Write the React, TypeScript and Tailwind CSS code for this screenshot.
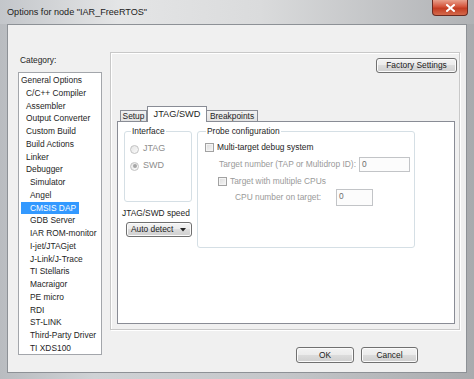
import React from 'react';

// tree of option categories, second value is the indent level
const categories: [string, number][] = [
    ['General Options', 0],
    ['C/C++ Compiler', 1],
    ['Assembler', 1],
    ['Output Converter', 1],
    ['Custom Build', 1],
    ['Build Actions', 1],
    ['Linker', 1],
    ['Debugger', 1],
    ['Simulator', 2],
    ['Angel', 2],
    ['CMSIS DAP', 2],
    ['GDB Server', 2],
    ['IAR ROM-monitor', 2],
    ['I-jet/JTAGjet', 2],
    ['J-Link/J-Trace', 2],
    ['TI Stellaris', 2],
    ['Macraigor', 2],
    ['PE micro', 2],
    ['RDI', 2],
    ['ST-LINK', 2],
    ['Third-Party Driver', 2],
    ['TI XDS100', 2],
];

const indent = ['pl-[2px]', 'pl-[7px]', 'pl-[11px]'];

const btn =
    'flex items-center justify-center border border-[#707070] rounded-[3px] bg-[linear-gradient(#f3f3f3,#ebebeb_50%,#dcdcdc_50%,#cfcfcf)] text-[#1b1b1b] shadow-[inset_0_0_0_1px_#fbfbfb]';

const Checkbox: React.FC = () => (
    <span className="inline-block w-[9px] h-[9px] border border-[#a2a2a2] bg-[linear-gradient(135deg,#dcdcdc,#f6f6f6)] shadow-[inset_0_0_0_1px_#f4f4f4]" />
);

const Radio: React.FC<{ checked?: boolean }> = ({ checked }) => (
    <span className="inline-flex items-center justify-center w-[9px] h-[9px] rounded-full border border-[#c2c2c2] bg-[linear-gradient(135deg,#e6e6e6,#fafafa)]">
        {checked && <span className="w-[4px] h-[4px] rounded-full bg-[#a6a6a6]" />}
    </span>
);

const App: React.FC = () => {
    return (
        <div className="w-[474px] h-[379px] flex flex-col bg-[linear-gradient(90deg,#b9bcc0,#cfd2d5_20%,#c4c6c9_60%,#a9abae)] font-['Liberation_Sans',Arial,sans-serif] text-[8.4px] text-[#1e1e1e] overflow-hidden">
            {/* title bar */}
            <div className="h-[24px] flex items-start bg-[linear-gradient(90deg,#c3c6ca,#e4e5e6_25%,#dadbdc_55%,#b0b2b5)]">
                <span className="pl-[7px] pt-[7px] text-[9.1px] leading-[10px] text-[#222]">Options for node "IAR_FreeRTOS"</span>
                <div className="ml-auto mr-[6px] w-[36px] h-[16px] rounded-b-[4px] border border-t-0 border-[#6b2a20] bg-[linear-gradient(#e8a08c,#d4543b_45%,#c23c22_55%,#d46a4c)] flex items-center justify-center">
                    <svg width="9" height="8" viewBox="0 0 9 8">
                        <path d="M1 1 L8 7 M8 1 L1 7" stroke="#fff" strokeWidth="2" strokeLinecap="square" />
                    </svg>
                </div>
            </div>

            {/* client area */}
            <div className="mx-[7px] mb-[6px] flex-1 border border-[#8d9196] bg-[#f0f0f0] flex">
                <div className="pl-[10px] pt-[30px] flex flex-col">
                    <span className="leading-[10px] pl-[2px]">Category:</span>
                    <div className="mt-[7px] w-[84px] h-[283px] border border-[#a3a6ab] bg-white pt-[1px]">
                        {categories.map(([name, level]) =>
                            name === 'CMSIS DAP' ? (
                                <div key={name} className="h-[12.75px] flex items-center">
                                    <span className="ml-[2px] pl-[9px] pr-[3px] leading-[12.4px] bg-[#3399ff] text-white">{name}</span>
                                </div>
                            ) : (
                                <div key={name} className={`h-[12.75px] leading-[12.75px] whitespace-nowrap ${indent[level]}`}>
                                    {name}
                                </div>
                            )
                        )}
                    </div>
                </div>

                <div className="ml-[8px] mt-[27px] flex flex-col">
                    {/* options frame */}
                    <div className="w-[350px] h-[278px] border border-[#c8c8c8] shadow-[inset_1px_1px_0_#fff,1px_1px_0_#fff] flex flex-col">
                        <div className="flex justify-end pt-[5px] pr-[2px]">
                            <div className={`${btn} w-[81px] h-[15px]`}>Factory Settings</div>
                        </div>

                        <div className="mt-[33px] ml-[6px] flex flex-col">
                            <div className="flex items-end pl-[3px] h-[15px]">
                                <div className="w-[27px] h-[11px] border border-b-0 border-[#898c95] bg-[linear-gradient(#f2f2f2,#e3e3e3)] flex items-center justify-center">
                                    Setup
                                </div>
                                <div className="relative z-10 w-[60px] h-[16px] -mb-px border border-b-0 border-[#898c95] bg-white flex items-center justify-center text-[9.2px]">
                                    JTAG/SWD
                                </div>
                                <div className="w-[51px] h-[11px] border border-b-0 border-l-0 border-[#898c95] bg-[linear-gradient(#f2f2f2,#e3e3e3)] flex items-center justify-center">
                                    Breakpoints
                                </div>
                            </div>

                            {/* tab page */}
                            <div className="w-[338px] h-[203px] border border-[#898c95] bg-white flex pl-[6px] pt-[4px]">
                                <div className="flex flex-col w-[68px]">
                                    <fieldset className="h-[76px] border border-[#d5dfe5] rounded-[3px] px-[5px]">
                                        <legend className="px-[1px] ml-[1px] leading-[10px]">Interface</legend>
                                        <div className="mt-[7px] flex items-center gap-[4px] h-[12px] text-[#8d8d8d] text-[9px]">
                                            <Radio />
                                            <span>JTAG</span>
                                        </div>
                                        <div className="mt-[5px] flex items-center gap-[4px] h-[12px] text-[#8d8d8d] text-[9px]">
                                            <Radio checked />
                                            <span>SWD</span>
                                        </div>
                                    </fieldset>
                                    <span className="mt-[6px] -ml-[2px] leading-[10px] whitespace-nowrap">JTAG/SWD speed</span>
                                    <div className={`${btn} mt-[4px] ml-[2px] w-[66px] h-[15px] justify-between! pl-[4px] pr-[5px]`}>
                                        <span>Auto detect</span>
                                        <svg width="6" height="4" viewBox="0 0 6 4">
                                            <path d="M0 0 H6 L3 3.5 Z" fill="#222" />
                                        </svg>
                                    </div>
                                </div>

                                <fieldset className="ml-[5px] w-[218px] h-[122px] border border-[#d5dfe5] rounded-[3px] pl-[7px]">
                                    <legend className="px-[1px] ml-[1px] leading-[10px]">Probe configuration</legend>
                                    <div className="mt-[6px] h-[10px] flex items-center gap-[3px]">
                                        <Checkbox />
                                        <span>Multi-target debug system</span>
                                    </div>
                                    <div className="mt-[5px] flex items-center pl-[14px] text-[#9a9a9a]">
                                        <span className="w-[140px] whitespace-nowrap">Target number (TAP or Multidrop ID):</span>
                                        <div className="w-[51px] h-[15px] border border-[#c2c4c7] bg-[#fcfcfc] pl-[2px] leading-[13px] text-[#6d6d6d]">0</div>
                                    </div>
                                    <div className="mt-[4px] h-[10px] flex items-center gap-[3px] pl-[13px] text-[#9a9a9a]">
                                        <Checkbox />
                                        <span>Target with multiple CPUs</span>
                                    </div>
                                    <div className="mt-[3px] flex items-center pl-[30px] text-[#9a9a9a]">
                                        <span className="w-[101px] whitespace-nowrap">CPU number on target:</span>
                                        <div className="w-[37px] h-[17px] border border-[#c2c4c7] bg-[#fcfcfc] pl-[2px] leading-[13px] text-[#6d6d6d]">0</div>
                                    </div>
                                </fieldset>
                            </div>
                        </div>
                    </div>

                    {/* dialog buttons */}
                    <div className="mt-[17px] flex gap-[7px] pl-[186px]">
                        <div className={`${btn} w-[58px] h-[16px]`}>OK</div>
                        <div className={`${btn} w-[57px] h-[16px]`}>Cancel</div>
                    </div>
                </div>
            </div>
        </div>
    );
};

export default App;
